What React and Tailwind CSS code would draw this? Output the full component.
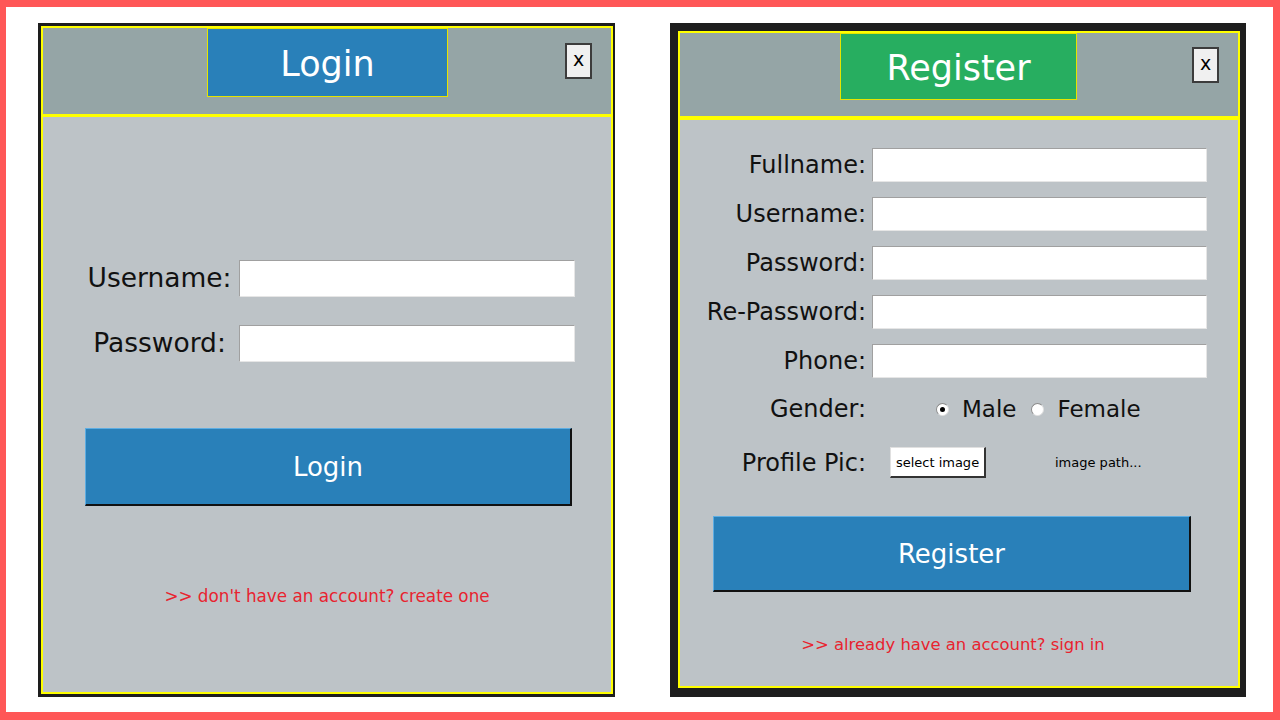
import { useState } from "react";

const font = "font-['DejaVu_Sans',sans-serif]";

const inputCls =
  "bg-white border border-t-[#a0a0a0] border-l-[#a0a0a0] border-b-[#e6e6e6] border-r-[#e6e6e6] outline-none px-1 text-[18px]";

const raisedBtn =
  "bg-[#2980b9] text-white border-t border-l border-t-[#5dade2] border-l-[#5dade2] border-r-2 border-b-2 border-r-[#111] border-b-[#111] flex items-center justify-center leading-none";

function CloseBtn() {
  return (
    <button className="w-[27px] h-[36px] bg-[#f0f0f0] border-2 border-[#3c3c3c] flex items-center justify-center text-[19px] leading-none text-black pb-[3px]">
      x
    </button>
  );
}

/* ============================
   Login window
============================ */
function LoginWindow() {
  const [user, setUser] = useState("");
  const [pass, setPass] = useState("");

  return (
    <div className="w-[577px] h-[674px] bg-[#1e1e1e] pt-[3px] pl-[3px] pr-[2px] pb-[3px] flex">
      <div className="flex-1 border-2 border-[#ffff00] flex flex-col bg-[#bdc3c7]">
        {/* Header */}
        <div className="h-[86px] bg-[#95a5a6] flex items-start shrink-0">
          <div className="ml-[164px] w-[241px] h-[69px] bg-[#2980b9] border border-[#e5e500] flex items-center justify-center text-white text-[35px] leading-none pt-[4px]">
            Login
          </div>
          <div className="ml-auto mr-[19px] mt-[15px]">
            <CloseBtn />
          </div>
        </div>
        <div className="h-[3px] bg-[#ffff00] shrink-0" />

        {/* Body */}
        <div className="flex-1 flex flex-col">
          <div className="mt-[143px] h-[37px] flex items-center pl-[37px]">
            <span className="w-[159px] text-center text-[26.5px] leading-none text-[#111]">Username:</span>
            <input
              value={user}
              onChange={(e) => setUser(e.target.value)}
              className={`${inputCls} w-[336px] h-[37px]`}
            />
          </div>
          <div className="mt-[28px] h-[37px] flex items-center pl-[37px]">
            <span className="w-[159px] text-center text-[26.5px] leading-none text-[#111]">Password:</span>
            <input
              type="password"
              value={pass}
              onChange={(e) => setPass(e.target.value)}
              className={`${inputCls} w-[336px] h-[37px]`}
            />
          </div>

          <button className={`${raisedBtn} mt-[66px] ml-[42px] w-[487px] h-[78px] text-[26px]`}>
            Login
          </button>

          <p className="mt-[80px] text-center text-[16.8px] leading-[20px] text-[#e8232f]">
            &gt;&gt; don't have an account? create one
          </p>
        </div>
      </div>
    </div>
  );
}

/* ============================
   Register window
============================ */
function Radio({ checked }) {
  return (
    <span className="w-[13px] h-[13px] rounded-full bg-white border border-t-[#8a8a8a] border-l-[#8a8a8a] border-b-[#e0e0e0] border-r-[#e0e0e0] flex items-center justify-center">
      {checked && <span className="w-[5px] h-[5px] rounded-full bg-black" />}
    </span>
  );
}

function Row({ label, type = "text" }) {
  return (
    <div className="h-[34px] flex items-center">
      <span className="w-[186px] text-right text-[24px] leading-none text-[#111]">{label}</span>
      <input type={type} className={`${inputCls} ml-[6px] w-[335px] h-[34px]`} />
    </div>
  );
}

function RegisterWindow() {
  const [gender, setGender] = useState("male");

  return (
    <div className="w-[576px] h-[674px] bg-[#1e1e1e] pt-[8px] pl-[8px] pr-[6px] pb-[9px] flex">
      <div className="flex-1 border-2 border-[#ffff00] flex flex-col bg-[#bdc3c7]">
        {/* Header */}
        <div className="h-[83px] bg-[#95a5a6] flex items-start shrink-0">
          <div className="ml-[160px] w-[237px] h-[67px] bg-[#27ae60] border border-[#e5e500] flex items-center justify-center text-white text-[35px] leading-none pt-[4px]">
            Register
          </div>
          <div className="ml-auto mr-[19px] mt-[14px]">
            <CloseBtn />
          </div>
        </div>
        <div className="h-[4px] bg-[#ffff00] shrink-0" />

        {/* Body */}
        <div className="flex-1 flex flex-col">
          <div className="mt-[28px] flex flex-col gap-[15px]">
            <Row label="Fullname:" />
            <Row label="Username:" />
            <Row label="Password:" type="password" />
            <Row label="Re-Password:" type="password" />
            <Row label="Phone:" />
          </div>

          <div className="mt-[16px] h-[30px] flex items-center text-[#111] leading-none">
            <span className="w-[186px] text-right text-[24px]">Gender:</span>
            <button
              onClick={() => setGender("male")}
              className="ml-[70px] flex items-center gap-[13px] text-[23px]"
            >
              <Radio checked={gender === "male"} />
              Male
            </button>
            <button
              onClick={() => setGender("female")}
              className="ml-[15px] flex items-center gap-[13px] text-[23px]"
            >
              <Radio checked={gender === "female"} />
              Female
            </button>
          </div>

          <div className="mt-[23px] h-[31px] flex items-center text-[#111] leading-none">
            <span className="w-[186px] text-right text-[24px]">Profile Pic:</span>
            <button className="ml-[24px] w-[96px] h-[31px] bg-white text-[13px] text-black border-t border-l border-t-[#e0e0e0] border-l-[#e0e0e0] border-r-2 border-b-2 border-r-[#333] border-b-[#333]">
              select image
            </button>
            <span className="ml-[69px] text-[13px] text-black">image path...</span>
          </div>

          <button className={`${raisedBtn} mt-[38px] ml-[33px] w-[478px] h-[76px] text-[26px]`}>
            Register
          </button>

          <p className="mt-[43px] pr-[12px] text-center text-[16.4px] leading-[20px] text-[#e8232f]">
            &gt;&gt; already have an account? sign in
          </p>
        </div>
      </div>
    </div>
  );
}

export default function App() {
  return (
    <div
      className={`${font} w-[1280px] h-[720px] bg-white border-[#ff5757] border-t-[7px] border-l-[6px] border-r-[7px] border-b-[8px] flex items-start`}
    >
      <div className="ml-[32px] mt-[16px]">
        <LoginWindow />
      </div>
      <div className="ml-[55px] mt-[16px]">
        <RegisterWindow />
      </div>
    </div>
  );
}
